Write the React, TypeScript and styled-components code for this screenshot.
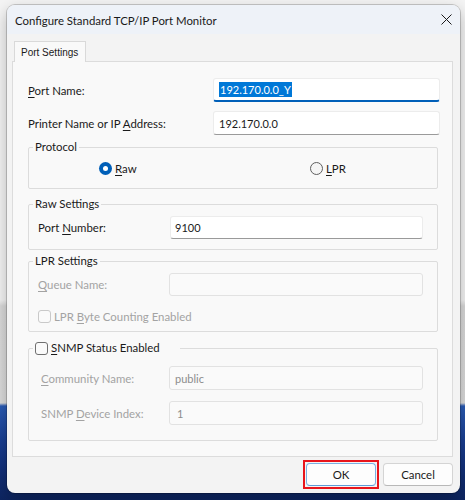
import React from 'react';
import styled, { createGlobalStyle } from 'styled-components';

const GlobalStyle = createGlobalStyle`
  html, body { margin: 0; padding: 0; }
  body {
    width: 465px;
    height: 500px;
    overflow: hidden;
    font-family: Lato, "Noto Sans", sans-serif;
    background: linear-gradient(180deg,
      #f4f4f4 0px, #f4f4f4 300px, #dadada 306px, #dcdcdc 403px,
      #2a5bb5 406px, #1a3f93 440px, #12307a 470px, #0d2560 500px);
  }
`;

const Desktop = styled.div`
  padding: 5px 0 0 7px;
`;

const Dialog = styled.div`
  width: 453px;
  height: 488px;
  border-radius: 8px;
  background: #f3f3f3;
  box-shadow: 0 0 0 1px rgba(0, 0, 0, 0.18), 0 6px 16px rgba(0, 0, 0, 0.28);
  overflow: hidden;
  display: flex;
  flex-direction: column;
  box-sizing: border-box;
`;

const TitleBar = styled.div`
  height: 29px;
  flex: none;
  display: flex;
  align-items: center;
  justify-content: space-between;
  padding: 0 8px 0 8px;
  background: #eef2f8;
`;

const TitleText = styled.span`
  font-size: 11.4px;
  color: #1a1a1a;
  padding-top: 1px;
`;

const CloseIcon = styled.svg`
  width: 11px;
  height: 11px;
  display: block;
`;

const Body = styled.div`
  flex: 1;
  display: flex;
  flex-direction: column;
  padding: 7px 7px 0 5px;
`;

const TabStrip = styled.div`
  display: flex;
  padding-left: 2px;
  height: 20px;
  position: relative;
  z-index: 1;
`;

const Tab = styled.div`
  height: 21px;
  box-sizing: border-box;
  padding: 0 7px 0 6px;
  border: 1px solid #d9d9d9;
  border-bottom: none;
  background: #f9f9f9;
  font-family: "Liberation Sans", Arial, sans-serif;
  font-size: 10px;
  color: #1a1a1a;
  display: flex;
  align-items: center;
`;

const Panel = styled.div`
  height: 396px;
  box-sizing: border-box;
  border: 1px solid #dcdcdc;
  background: #f9f9f9;
  padding: 16px 12px 0 15px;
  display: flex;
  flex-direction: column;
`;

const FieldRow = styled.div<{ $mt: number; $labelWidth: number }>`
  display: grid;
  grid-template-columns: ${p => p.$labelWidth}px 1fr;
  align-items: center;
  margin-top: ${p => p.$mt}px;
`;

const Label = styled.span<{ $disabled?: boolean; $indent?: number }>`
  font-size: 11.4px;
  color: ${p => (p.$disabled ? '#a3a3a3' : '#1a1a1a')};
  padding-left: ${p => p.$indent ?? 0}px;
  white-space: nowrap;
`;

const TextBox = styled.div<{ $focused?: boolean; $disabled?: boolean; $h: number; $pl: number }>`
  height: ${p => p.$h}px;
  box-sizing: border-box;
  display: flex;
  align-items: center;
  padding-left: ${p => p.$pl}px;
  font-size: 11px;
  border-radius: 3px;
  background: ${p => (p.$disabled ? '#fafafa' : '#ffffff')};
  color: ${p => (p.$disabled ? '#8c8c8c' : '#1a1a1a')};
  border: 1px solid ${p => (p.$disabled ? '#e2e2e2' : '#ececec')};
  border-bottom: ${p =>
    p.$focused ? '2px solid #005fb8' : p.$disabled ? '1px solid #e2e2e2' : '1px solid #9a9a9a'};
`;

const Selected = styled.span`
  background: #0078d7;
  color: #ffffff;
  padding: 1px 1px 1px 1px;
  line-height: 13px;
`;

const Group = styled.fieldset<{ $mt: number; $pt: number; $pb: number }>`
  margin: ${p => p.$mt}px 2px 0 0;
  border: 1px solid #dcdcdc;
  border-radius: 2px;
  padding: ${p => p.$pt}px 14px ${p => p.$pb}px 9px;
  min-width: 0;
`;

const Legend = styled.legend<{ $pr?: number }>`
  margin-left: -5px;
  padding: 0 ${p => p.$pr ?? 2}px 0 2px;
  font-size: 11.4px;
  line-height: 16px;
  height: 16px;
  color: #1a1a1a;
  display: flex;
  align-items: center;
  gap: 3px;
`;

const RadioRow = styled.div`
  display: grid;
  grid-template-columns: 211px auto;
  padding-left: 61px;
  height: 16px;
  align-items: center;
`;

const Choice = styled.span`
  display: flex;
  align-items: center;
  gap: 3px;
  font-size: 11.4px;
  color: #1a1a1a;
`;

const Radio = styled.span<{ $checked?: boolean }>`
  width: 13px;
  height: 13px;
  box-sizing: border-box;
  border-radius: 50%;
  display: flex;
  align-items: center;
  justify-content: center;
  background: ${p => (p.$checked ? '#005fb8' : '#f5f5f5')};
  border: ${p => (p.$checked ? 'none' : '1px solid #5f5f5f')};
  &::after {
    content: '';
    width: 5px;
    height: 5px;
    border-radius: 50%;
    background: #ffffff;
    display: ${p => (p.$checked ? 'block' : 'none')};
  }
`;

const Check = styled.span<{ $disabled?: boolean }>`
  width: 13px;
  height: 13px;
  box-sizing: border-box;
  border-radius: 3px;
  background: #fafafa;
  border: 1px solid ${p => (p.$disabled ? '#c9c9c9' : '#6f6f6f')};
  flex: none;
`;

const CheckRow = styled.div<{ $mt: number; $disabled?: boolean }>`
  display: flex;
  align-items: center;
  gap: 3px;
  height: 16px;
  margin-top: ${p => p.$mt}px;
  font-size: 11.4px;
  color: ${p => (p.$disabled ? '#a3a3a3' : '#1a1a1a')};
`;

const ButtonRow = styled.div`
  display: flex;
  justify-content: flex-end;
  align-items: center;
  gap: 4px;
  margin-top: 3px;
`;

const Highlight = styled.div`
  border: 2px solid #e8141b;
  padding: 1px;
  display: flex;
`;

const Button = styled.button<{ $default?: boolean }>`
  width: 70px;
  height: 23px;
  box-sizing: border-box;
  border-radius: 4px;
  background: #fdfdfd;
  font-family: Lato, "Noto Sans", sans-serif;
  font-size: 11.4px;
  color: #1a1a1a;
  padding: 0;
  border: 1px solid ${p => (p.$default ? '#7ab0e2' : '#d4d4d4')};
  border-bottom-color: ${p => (p.$default ? '#5e9ad6' : '#b8b8b8')};
`;

const Key = styled.u`
  text-decoration-thickness: 1px;
  text-underline-offset: 2px;
`;

export default function App() {
  return (
    <>
      <GlobalStyle />
      <Desktop>
        <Dialog>
          <TitleBar>
            <TitleText>Configure Standard TCP/IP Port Monitor</TitleText>
            <CloseIcon viewBox="0 0 11 11">
              <path d="M0.5 0.5 L10.5 10.5 M10.5 0.5 L0.5 10.5" stroke="#1a1a1a" strokeWidth="1" fill="none" />
            </CloseIcon>
          </TitleBar>
          <Body>
            <TabStrip>
              <Tab>Port Settings</Tab>
            </TabStrip>
            <Panel>
              <FieldRow $mt={0} $labelWidth={185}>
                <Label><Key>P</Key>ort Name:</Label>
                <TextBox $focused $h={24} $pl={5}>
                  <Selected>192.170.0.0_Y</Selected>
                </TextBox>
              </FieldRow>
              <FieldRow $mt={9} $labelWidth={185}>
                <Label>Printer Name or IP <Key>A</Key>ddress:</Label>
                <TextBox $h={24} $pl={5}>192.170.0.0</TextBox>
              </FieldRow>

              <Group $mt={4} $pt={5} $pb={12}>
                <Legend>Protocol</Legend>
                <RadioRow>
                  <Choice>
                    <Radio $checked />
                    <span><Key>R</Key>aw</span>
                  </Choice>
                  <Choice>
                    <Radio />
                    <span><Key>L</Key>PR</span>
                  </Choice>
                </RadioRow>
              </Group>

              <Group $mt={7} $pt={4} $pb={10}>
                <Legend>Raw Settings</Legend>
                <FieldRow $mt={0} $labelWidth={132}>
                  <Label>Port <Key>N</Key>umber:</Label>
                  <TextBox $h={23} $pl={4}>9100</TextBox>
                </FieldRow>
              </Group>

              <Group $mt={3} $pt={4} $pb={7}>
                <Legend>LPR Settings</Legend>
                <FieldRow $mt={0} $labelWidth={131}>
                  <Label $disabled><Key>Q</Key>ueue Name:</Label>
                  <TextBox $disabled $h={23} $pl={5} />
                </FieldRow>
                <CheckRow $mt={12} $disabled>
                  <Check $disabled />
                  <span>LPR <Key>B</Key>yte Counting Enabled</span>
                </CheckRow>
              </Group>

              <Group $mt={8} $pt={10} $pb={15}>
                <Legend $pr={20}>
                  <Check />
                  <span><Key>S</Key>NMP Status Enabled</span>
                </Legend>
                <FieldRow $mt={0} $labelWidth={131}>
                  <Label $disabled $indent={3}><Key>C</Key>ommunity Name:</Label>
                  <TextBox $disabled $h={24} $pl={5}>public</TextBox>
                </FieldRow>
                <FieldRow $mt={11} $labelWidth={131}>
                  <Label $disabled $indent={3}>SNMP <Key>D</Key>evice Index:</Label>
                  <TextBox $disabled $h={24} $pl={7}>1</TextBox>
                </FieldRow>
              </Group>
            </Panel>
            <ButtonRow>
              <Highlight>
                <Button $default>OK</Button>
              </Highlight>
              <Button>Cancel</Button>
            </ButtonRow>
          </Body>
        </Dialog>
      </Desktop>
    </>
  );
}
